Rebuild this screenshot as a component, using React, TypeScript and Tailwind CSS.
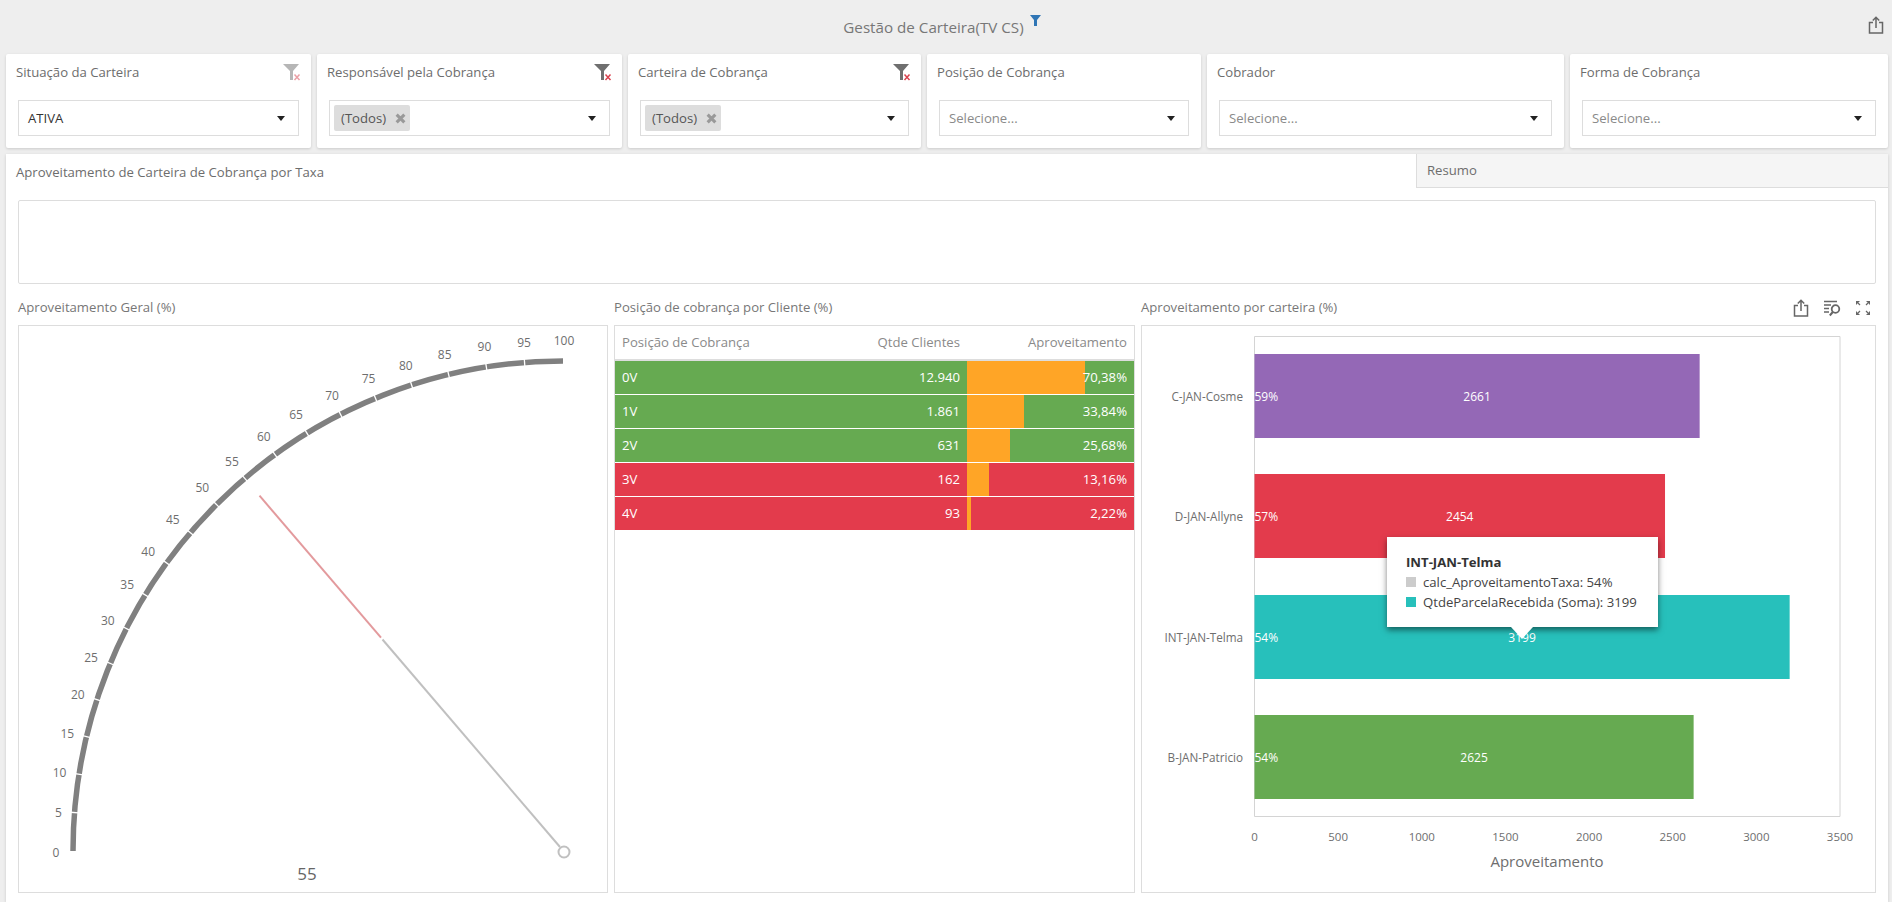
import React from 'react';

const font = { fontFamily: '"Open Sans", "Liberation Sans", sans-serif' };

const FunnelClear = ({ faded = false }: { faded?: boolean }) => (
  <svg width="18" height="17" viewBox="0 0 18 17" className={faded ? 'opacity-50' : ''}>
    <path d="M0 0h16l-6 7v9H7V7z" fill="#6f6f6f" />
    <path d="M11.5 10.5l5 5.5M16.5 10.5l-5 5.5" stroke="#d9424e" strokeWidth="1.5" fill="none" />
  </svg>
);

const ShareIcon = ({ size = 18 }: { size?: number }) => (
  <svg width={size} height={size} viewBox="0 0 18 18" fill="none" stroke="#666" strokeWidth="1.5">
    <path d="M6 6.5H2.5v10.5h13V6.5H12" />
    <path d="M9 12V1.5M5.8 4.6L9 1.3l3.2 3.3" />
  </svg>
);

const Caret = () => (
  <svg width="8" height="5" viewBox="0 0 8 5" className="shrink-0">
    <path d="M0 0h8L4 5z" fill="#222" />
  </svg>
);

const Chip = () => (
  <div className="flex items-center h-[26px] w-[76px] pl-[7px] gap-[9px] bg-[#dddddd] rounded-[2px] text-[#555]">
    <span className="pt-[1px]">(Todos)</span>
    <svg width="11" height="11" viewBox="0 0 10 10">
      <path d="M1.5 1.5l7 7M8.5 1.5l-7 7" stroke="#999" strokeWidth="2.8" />
    </svg>
  </div>
);

type Filter = {
  label: string;
  width: string;
  kind: 'value' | 'chip' | 'empty';
  icon?: 'faded' | 'solid';
};

const filters: Filter[] = [
  { label: 'Situação da Carteira', width: 'w-[305px]', kind: 'value', icon: 'faded' },
  { label: 'Responsável pela Cobrança', width: 'w-[305px]', kind: 'chip', icon: 'solid' },
  { label: 'Carteira de Cobrança', width: 'w-[293px]', kind: 'chip', icon: 'solid' },
  { label: 'Posição de Cobrança', width: 'w-[274px]', kind: 'empty' },
  { label: 'Cobrador', width: 'w-[357px]', kind: 'empty' },
  { label: 'Forma de Cobrança', width: 'w-[318px]', kind: 'empty' },
];

const FilterCard = ({ f }: { f: Filter }) => (
  <div className={`${f.width} h-[94px] bg-white rounded-[2px] shadow-[0_1px_3px_rgba(0,0,0,0.15)] px-[10px] pt-[10px] flex flex-col text-[13.15px]`}>
    <div className="flex items-start justify-between h-[36px]">
      <span className="text-[#6d6d6d] leading-[18px] -mt-[1px]">{f.label}</span>
      {f.icon && <FunnelClear faded={f.icon === 'faded'} />}
    </div>
    <div className="h-[36px] mx-[2px] border border-[#dddddd] flex items-center justify-between pl-[4px] pr-[13px]">
      {f.kind === 'value' && <span className="pl-[5px] pt-[2px] text-[#333]">ATIVA</span>}
      {f.kind === 'chip' && <Chip />}
      {f.kind === 'empty' && <span className="pl-[5px] pt-[2px] text-[#8a8a8a]">Selecione...</span>}
      <Caret />
    </div>
  </div>
);

const gaugeLabels: [number, number, number][] = [
  [0, 56, 852.7], [5, 58.4, 812.7], [10, 59.5, 772.7], [15, 67.3, 733.7], [20, 77.8, 694.7],
  [25, 91, 657], [30, 107.8, 620.7], [35, 127.2, 584.7], [40, 148.2, 551.7], [45, 172.8, 519.7],
  [50, 202.3, 487.7], [55, 231.9, 461.7], [60, 263.8, 436.7], [65, 296, 414.7], [70, 332, 395.7],
  [75, 368.5, 378.7], [80, 405.8, 365.7], [85, 444.7, 354.7], [90, 484.4, 346.7], [95, 524, 342.7],
  [100, 564, 340.7],
];

const Gauge = () => {
  const cx = 563;
  const cy = 851;
  const r = 490;
  const ticks = gaugeLabels.slice(1, -1).map(([v]) => {
    const a = (v / 100) * (Math.PI / 2);
    return {
      x1: cx - (r - 4) * Math.cos(a),
      y1: cy - (r - 4) * Math.sin(a),
      x2: cx - (r + 4) * Math.cos(a),
      y2: cy - (r + 4) * Math.sin(a),
      v,
    };
  });
  return (
    <svg viewBox="19 326 588 566" className="w-full h-full block" style={font}>
      <path d={`M${cx - r} ${cy}A${r} ${r} 0 0 1 ${cx} ${cy - r}`} fill="none" stroke="#808080" strokeWidth="5.5" />
      {ticks.map((t) => (
        <line key={t.v} x1={t.x1} y1={t.y1} x2={t.x2} y2={t.y2} stroke="#fff" strokeWidth="1.3" />
      ))}
      {gaugeLabels.map(([v, x, y]) => (
        <text key={v} x={x} y={y} textAnchor="middle" dominantBaseline="central" fontSize="12" fill="#6e6e6e">
          {v}
        </text>
      ))}
      <line x1="259.5" y1="495.7" x2="381" y2="637.7" stroke="#e39a9d" strokeWidth="2" />
      <line x1="382.5" y1="639.5" x2="560" y2="847" stroke="#c0c0c0" strokeWidth="2" />
      <circle cx="564" cy="852" r="5.5" fill="#fff" stroke="#c0c0c0" strokeWidth="2" />
      <text x="307" y="873" textAnchor="middle" dominantBaseline="central" fontSize="17" fill="#666">55</text>
    </svg>
  );
};

const rows = [
  { name: '0V', qty: '12.940', pct: '70,38%', w: 70.38, bg: 'bg-[#66aa51]' },
  { name: '1V', qty: '1.861', pct: '33,84%', w: 33.84, bg: 'bg-[#66aa51]' },
  { name: '2V', qty: '631', pct: '25,68%', w: 25.68, bg: 'bg-[#66aa51]' },
  { name: '3V', qty: '162', pct: '13,16%', w: 13.16, bg: 'bg-[#e33b4c]' },
  { name: '4V', qty: '93', pct: '2,22%', w: 2.22, bg: 'bg-[#e33b4c]' },
];

const PositionTable = () => (
  <div className="h-full text-[13.15px]">
    <div className="flex items-center h-[33px] border-b-[2px] border-[#dddddd] text-[#8a8a8a] box-content">
      <div className="w-[352px] flex justify-between pl-[7px] pr-[7px]">
        <span>Posição de Cobrança</span>
        <span>Qtde Clientes</span>
      </div>
      <div className="flex-1 text-right pr-[7px]">Aproveitamento</div>
    </div>
    {rows.map((r) => (
      <div key={r.name} className={`flex items-center h-[33px] mb-px ${r.bg} text-white`}>
        <div className="w-[352px] flex justify-between pl-[7px] pr-[7px]">
          <span>{r.name}</span>
          <span>{r.qty}</span>
        </div>
        <div className="relative flex-1 h-full flex items-center justify-end pr-[7px]">
          <div className="absolute left-0 top-0 h-full bg-[#ffa526]" style={{ width: `${r.w * 1.68}px` }} />
          <span className="relative">{r.pct}</span>
        </div>
      </div>
    ))}
  </div>
);

const bars = [
  { name: 'C-JAN-Cosme', val: 2661, pct: '59%', y: 354, color: '#9468b6' },
  { name: 'D-JAN-Allyne', val: 2454, pct: '57%', y: 474, color: '#e33b4c' },
  { name: 'INT-JAN-Telma', val: 3199, pct: '54%', y: 595, color: '#27c0bb' },
  { name: 'B-JAN-Patricio', val: 2625, pct: '54%', y: 715, color: '#66aa51' },
];

const BarChart = () => {
  const x0 = 1254.5;
  const plotW = 585.5;
  return (
    <svg viewBox="1142 326 733 566" className="w-full h-full block" style={font}>
      <path d={`M${x0} 336.5H${x0 + plotW}V816.5H${x0}Z`} fill="none" stroke="#d4d4d4" strokeWidth="1" />
      {bars.map((b) => {
        const w = (b.val / 3500) * plotW;
        return (
          <g key={b.name}>
            <rect x={x0} y={b.y} width={w} height={84} fill={b.color} />
            <text x={1243} y={b.y + 42} textAnchor="end" dominantBaseline="central" fontSize="11.7" fill="#6e6e6e">{b.name}</text>
            <text x={x0} y={b.y + 42} dominantBaseline="central" fontSize="12" fill="#fff">{b.pct}</text>
            <text x={x0 + w / 2} y={b.y + 42} textAnchor="middle" dominantBaseline="central" fontSize="12" fill="#fff">{b.val}</text>
          </g>
        );
      })}
      {[0, 500, 1000, 1500, 2000, 2500, 3000, 3500].map((t) => (
        <text key={t} x={x0 + (t / 3500) * plotW} y={836} textAnchor="middle" dominantBaseline="central" fontSize="11.5" fill="#6e6e6e">{t}</text>
      ))}
      <text x={1547} y={861} textAnchor="middle" dominantBaseline="central" fontSize="15" fill="#6e6e6e">Aproveitamento</text>
    </svg>
  );
};

const Tooltip = () => (
  <div className="absolute left-[245px] top-[211px] w-[271px] h-[90px] bg-white shadow-[0_3px_6px_rgba(0,0,0,0.5)] pl-[19px] pt-[15px] text-[13.15px] text-[#444] leading-[20px]">
    <div className="font-bold text-[#333]">INT-JAN-Telma</div>
    <div className="flex items-center gap-[7px]">
      <span className="w-[10px] h-[10px] bg-[#cccccc]" />
      <span>calc_AproveitamentoTaxa: 54%</span>
    </div>
    <div className="flex items-center gap-[7px]">
      <span className="w-[10px] h-[10px] bg-[#27c0bb]" />
      <span>QtdeParcelaRecebida (Soma): 3199</span>
    </div>
    <div className="absolute left-[124px] top-full w-0 h-0 border-l-[11px] border-r-[11px] border-t-[12px] border-l-transparent border-r-transparent border-t-white" />
  </div>
);

const PanelTitle = ({ children }: { children: React.ReactNode }) => (
  <div className="h-[35px] flex items-center text-[13.15px] text-[#777]">{children}</div>
);

const ChartTools = () => (
  <div className="flex items-center gap-[14px] pr-[6px]">
    <ShareIcon size={18} />
    <svg width="18" height="18" viewBox="0 0 18 18" fill="none" stroke="#666" strokeWidth="1.4">
      <path d="M0 2.5h13M0 6h7M0 9.5h5M0 13h5" />
      <circle cx="11.5" cy="10" r="3.8" strokeWidth="1.8" />
      <path d="M8.8 13l-3 3.5" strokeWidth="2" />
    </svg>
    <svg width="14" height="14" viewBox="0 0 14 14" fill="#666">
      <path d="M0 0h4L0 4zM14 0v4l-4-4zM0 14v-4l4 4zM14 14h-4l4-4z" />
      <path d="M2 2l2 2M12 2l-2 2M2 12l2-2M12 12l-2-2" stroke="#666" strokeWidth="1.2" />
    </svg>
  </div>
);

const App = () => {
  return (
    <div className="w-[1892px] h-[902px] overflow-hidden bg-[#eeeeee] flex flex-col" style={font}>
      <div className="relative h-[54px] shrink-0 flex items-center justify-center">
        <div className="flex items-start gap-[6px] -ml-[8px]">
          <span className="text-[15.2px] text-[#777]">Gestão de Carteira(TV CS)</span>
          <svg width="11" height="11" viewBox="0 0 11 11" className="mt-[-1px]">
            <path d="M0 0h11L7 5v6H4V5z" fill="#2f75b5" />
          </svg>
        </div>
        <div className="absolute right-[7px] top-[16px]">
          <ShareIcon />
        </div>
      </div>

      <div className="flex gap-[6px] pl-[6px] shrink-0">
        {filters.map((f) => (
          <FilterCard key={f.label} f={f} />
        ))}
      </div>

      <div className="mt-[6px] ml-[6px] w-[1882px] flex-1 bg-white shadow-[0_1px_3px_rgba(0,0,0,0.15)] flex flex-col min-h-0">
        <div className="flex h-[34px] shrink-0 text-[13.15px] text-[#6d6d6d]">
          <div className="flex-1 flex items-center pl-[10px] pt-[3px]">Aproveitamento de Carteira de Cobrança por Taxa</div>
          <div className="w-[472px] flex items-center pl-[10px] pt-[1px] bg-[#f5f5f5] border-l border-b border-[#dddddd]">Resumo</div>
        </div>
        <div className="px-[12px] pt-[12px] flex flex-col flex-1 min-h-0">
          <div className="h-[84px] shrink-0 border border-[#dddddd] rounded-[2px]" />
          <div className="flex gap-[6px] h-[609px] shrink-0">
            <div className="w-[590px] flex flex-col">
              <div className="pt-[6px]"><PanelTitle>Aproveitamento Geral (%)</PanelTitle></div>
              <div className="h-[568px] border border-[#dddddd]"><Gauge /></div>
            </div>
            <div className="w-[521px] flex flex-col">
              <div className="pt-[6px]"><PanelTitle>Posição de cobrança por Cliente (%)</PanelTitle></div>
              <div className="h-[568px] border border-[#dddddd]"><PositionTable /></div>
            </div>
            <div className="w-[735px] flex flex-col">
              <div className="pt-[6px] flex justify-between">
                <PanelTitle>Aproveitamento por carteira (%)</PanelTitle>
                <ChartTools />
              </div>
              <div className="relative h-[568px] border border-[#dddddd]">
                <BarChart />
                <Tooltip />
              </div>
            </div>
          </div>
        </div>
      </div>
    </div>
  );
};

export default App;
